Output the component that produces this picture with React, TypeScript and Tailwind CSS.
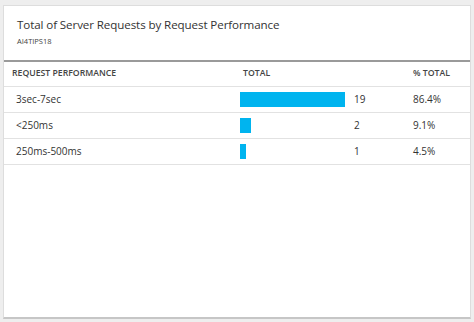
const ROWS = [
  { label: "3sec-7sec", count: 19, pct: "86.4%" },
  { label: "<250ms", count: 2, pct: "9.1%" },
  { label: "250ms-500ms", count: 1, pct: "4.5%" },
];

const MAX = 19;

export default function App() {
  return (
    <div
      className="w-[474px] h-[322px] bg-[#eeeeee] pt-[5px] px-[3px] pb-[3px]"
      style={{ fontFamily: '"Open Sans", "Noto Sans", sans-serif' }}
    >
      <div className="h-full bg-white border border-[#dddddd] border-b-[2px] border-b-[#c6c6c6] flex flex-col">
        {/* title block */}
        <div className="pl-[13px] pt-[11px] h-[54px]">
          <div className="text-[11.6px] leading-[16px] text-[#333333] tracking-[-0.1px]">
            Total of Server Requests by Request Performance
          </div>
          <div className="text-[7.5px] leading-[10px] text-[#444444] mt-[3px]">AI4TIPS18</div>
        </div>
        <div className="h-[2px] bg-[#9a9a9a]" />

        {/* column headers */}
        <div className="flex items-center h-[25px] border-b border-[#e2e2e2] text-[8.7px] font-semibold text-[#444444] uppercase">
          <div className="w-[236px] pl-[8px]">Request Performance</div>
          <div className="w-[173px] pl-[3px]">Total</div>
          <div className="flex-1">% Total</div>
        </div>

        {ROWS.map((r) => (
          <div
            key={r.label}
            className="flex items-center h-[26px] border-b border-[#e2e2e2] text-[10px] text-[#333333]"
          >
            <div className="w-[236px] pl-[12px]">{r.label}</div>
            <div className="w-[114px] flex items-center">
              <div
                className="h-[15px] bg-[#00b4ef]"
                style={{ width: `${Math.round((r.count / MAX) * 105)}px` }}
              />
            </div>
            <div className="w-[59px]">{r.count}</div>
            <div className="flex-1">{r.pct}</div>
          </div>
        ))}
      </div>
    </div>
  );
}
